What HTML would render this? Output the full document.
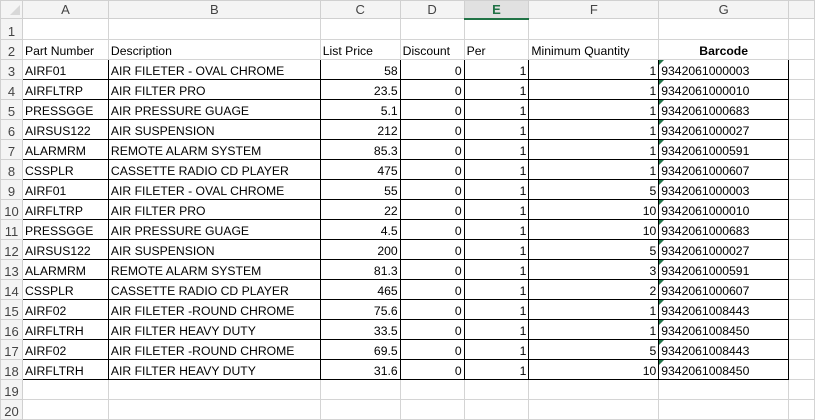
<!DOCTYPE html><html><head><style>
body{margin:0;width:815px;height:404px;overflow:hidden;background:#fff;font-family:"Liberation Sans",Arial,sans-serif;font-size:12.2px;color:#000}
table{border-collapse:collapse;table-layout:fixed;position:absolute;left:0;top:0}
td{height:19px;padding:0 2px;border:1px solid #d4d4d4;white-space:nowrap;overflow:hidden;line-height:15px;vertical-align:bottom}
tr.h td{background:#f4f4f4;color:#444;text-align:center;border-color:#d0d0d0;height:17px;font-size:13px;vertical-align:middle}
td.rh{background:#f4f4f4;color:#444;text-align:center;padding:0;border-color:#d0d0d0;font-size:13px}
tr.h td.sel{background:#e1e1e1;color:#217346;font-weight:bold;border-bottom:2px solid #217346;height:16px}
.r{text-align:right}
tr.d td.c{border:1px solid #000}
td.g{position:relative}
td.g::before{content:"";position:absolute;left:0;top:0;border-top:5px solid #217346;border-right:5px solid transparent}
</style></head><body>
<table>
<colgroup><col style="width:22px"><col style="width:86px"><col style="width:212px"><col style="width:80px"><col style="width:64px"><col style="width:65px"><col style="width:130px"><col style="width:130px"><col style="width:26px"></colgroup>
<tr class="h"><td style="background:#f4f4f4"><svg width="12" height="12" style="position:relative;left:4px;top:2px"><path d="M11 1V11H1Z" fill="#d8d8d8"/></svg></td><td>A</td><td>B</td><td>C</td><td>D</td><td class="sel">E</td><td>F</td><td>G</td><td></td></tr>
<tr><td class="rh">1</td><td></td><td></td><td></td><td></td><td></td><td></td><td></td><td></td></tr>
<tr><td class="rh">2</td><td>Part Number</td><td>Description</td><td>List Price</td><td>Discount</td><td>Per</td><td>Minimum Quantity</td><td style="text-align:center;font-weight:bold">Barcode</td><td></td></tr>
<tr class="d"><td class="rh">3</td><td class="c">AIRF01</td><td class="c">AIR FILETER - OVAL CHROME</td><td class="c r">58</td><td class="c r">0</td><td class="c r">1</td><td class="c r">1</td><td class="c g">9342061000003</td><td></td></tr>
<tr class="d"><td class="rh">4</td><td class="c">AIRFLTRP</td><td class="c">AIR FILTER PRO</td><td class="c r">23.5</td><td class="c r">0</td><td class="c r">1</td><td class="c r">1</td><td class="c g">9342061000010</td><td></td></tr>
<tr class="d"><td class="rh">5</td><td class="c">PRESSGGE</td><td class="c">AIR PRESSURE GUAGE</td><td class="c r">5.1</td><td class="c r">0</td><td class="c r">1</td><td class="c r">1</td><td class="c g">9342061000683</td><td></td></tr>
<tr class="d"><td class="rh">6</td><td class="c">AIRSUS122</td><td class="c">AIR SUSPENSION</td><td class="c r">212</td><td class="c r">0</td><td class="c r">1</td><td class="c r">1</td><td class="c g">9342061000027</td><td></td></tr>
<tr class="d"><td class="rh">7</td><td class="c">ALARMRM</td><td class="c">REMOTE ALARM SYSTEM</td><td class="c r">85.3</td><td class="c r">0</td><td class="c r">1</td><td class="c r">1</td><td class="c g">9342061000591</td><td></td></tr>
<tr class="d"><td class="rh">8</td><td class="c">CSSPLR</td><td class="c">CASSETTE RADIO CD PLAYER</td><td class="c r">475</td><td class="c r">0</td><td class="c r">1</td><td class="c r">1</td><td class="c g">9342061000607</td><td></td></tr>
<tr class="d"><td class="rh">9</td><td class="c">AIRF01</td><td class="c">AIR FILETER - OVAL CHROME</td><td class="c r">55</td><td class="c r">0</td><td class="c r">1</td><td class="c r">5</td><td class="c g">9342061000003</td><td></td></tr>
<tr class="d"><td class="rh">10</td><td class="c">AIRFLTRP</td><td class="c">AIR FILTER PRO</td><td class="c r">22</td><td class="c r">0</td><td class="c r">1</td><td class="c r">10</td><td class="c g">9342061000010</td><td></td></tr>
<tr class="d"><td class="rh">11</td><td class="c">PRESSGGE</td><td class="c">AIR PRESSURE GUAGE</td><td class="c r">4.5</td><td class="c r">0</td><td class="c r">1</td><td class="c r">10</td><td class="c g">9342061000683</td><td></td></tr>
<tr class="d"><td class="rh">12</td><td class="c">AIRSUS122</td><td class="c">AIR SUSPENSION</td><td class="c r">200</td><td class="c r">0</td><td class="c r">1</td><td class="c r">5</td><td class="c g">9342061000027</td><td></td></tr>
<tr class="d"><td class="rh">13</td><td class="c">ALARMRM</td><td class="c">REMOTE ALARM SYSTEM</td><td class="c r">81.3</td><td class="c r">0</td><td class="c r">1</td><td class="c r">3</td><td class="c g">9342061000591</td><td></td></tr>
<tr class="d"><td class="rh">14</td><td class="c">CSSPLR</td><td class="c">CASSETTE RADIO CD PLAYER</td><td class="c r">465</td><td class="c r">0</td><td class="c r">1</td><td class="c r">2</td><td class="c g">9342061000607</td><td></td></tr>
<tr class="d"><td class="rh">15</td><td class="c">AIRF02</td><td class="c">AIR FILETER -ROUND CHROME</td><td class="c r">75.6</td><td class="c r">0</td><td class="c r">1</td><td class="c r">1</td><td class="c g">9342061008443</td><td></td></tr>
<tr class="d"><td class="rh">16</td><td class="c">AIRFLTRH</td><td class="c">AIR FILTER HEAVY DUTY</td><td class="c r">33.5</td><td class="c r">0</td><td class="c r">1</td><td class="c r">1</td><td class="c g">9342061008450</td><td></td></tr>
<tr class="d"><td class="rh">17</td><td class="c">AIRF02</td><td class="c">AIR FILETER -ROUND CHROME</td><td class="c r">69.5</td><td class="c r">0</td><td class="c r">1</td><td class="c r">5</td><td class="c g">9342061008443</td><td></td></tr>
<tr class="d"><td class="rh">18</td><td class="c">AIRFLTRH</td><td class="c">AIR FILTER HEAVY DUTY</td><td class="c r">31.6</td><td class="c r">0</td><td class="c r">1</td><td class="c r">10</td><td class="c g">9342061008450</td><td></td></tr>
<tr><td class="rh">19</td><td></td><td></td><td></td><td></td><td></td><td></td><td></td><td></td></tr>
<tr><td class="rh">20</td><td></td><td></td><td></td><td></td><td></td><td></td><td></td><td></td></tr>
</table>
</body></html>
